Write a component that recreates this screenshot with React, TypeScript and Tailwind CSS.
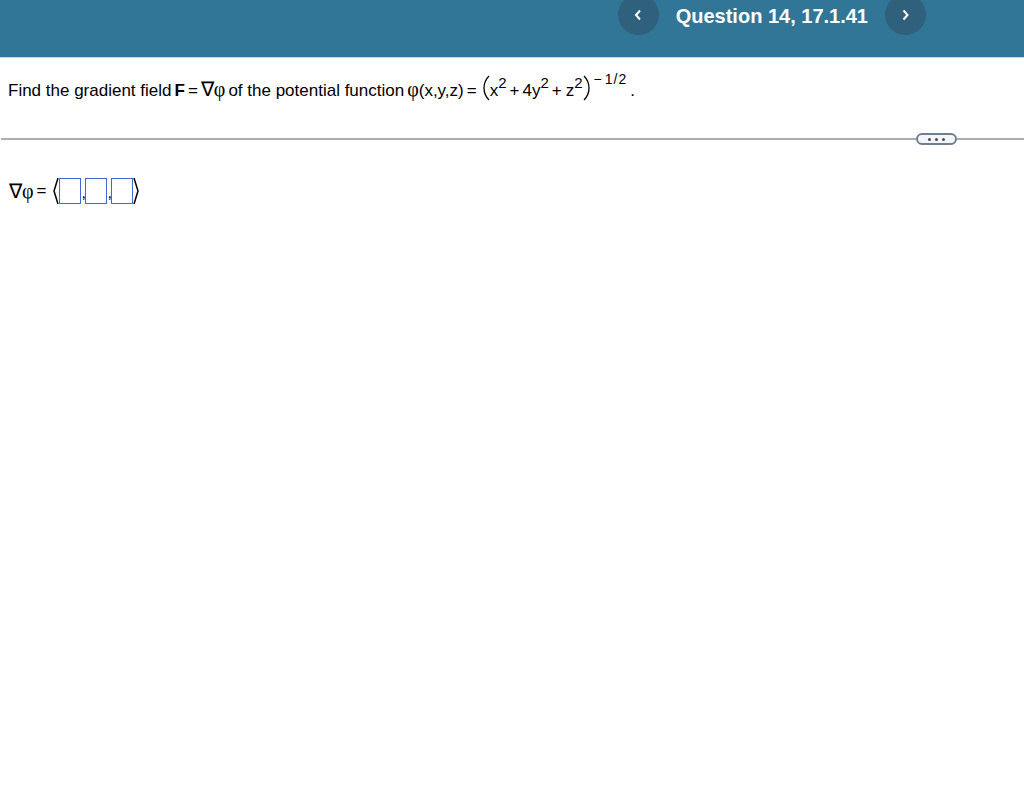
import { useState } from "react";
import type { ReactNode } from "react";

const COMPONENTS = ["x", "y", "z"] as const;

function NavButton({ label, points }: { label: string; points: string }) {
  return (
    <button
      type="button"
      aria-label={label}
      className="flex size-[41px] items-center justify-center rounded-full bg-[#2f617c] text-white"
    >
      <svg viewBox="0 0 10 12" className="h-3 w-[10px]" fill="none" stroke="currentColor" strokeWidth="2">
        <polyline points={points} />
      </svg>
    </button>
  );
}

function Sup({ children }: { children: ReactNode }) {
  return <span className="relative -top-2 text-[15px]">{children}</span>;
}

function Paren({ d }: { d: string }) {
  return (
    <svg viewBox="0 0 7 26" className="relative -top-1 h-[26px] w-[7px] self-center" fill="none" stroke="currentColor" strokeWidth="1.3">
      <path d={d} />
    </svg>
  );
}

function Greek({ children }: { children: ReactNode }) {
  return <span className="font-['Liberation_Serif',serif] text-xl/6">{children}</span>;
}

export default function App() {
  const [answers, setAnswers] = useState(["", "", ""]);

  const setAnswer = (index: number, value: string) => {
    setAnswers(answers.map((answer, i) => (i === index ? value : answer)));
  };

  return (
    <div className="min-h-screen bg-white font-['Liberation_Sans',Arial,sans-serif] text-[17px] leading-6 text-black">
      <header className="flex h-[58px] items-start justify-end overflow-hidden border-b border-[#c9d3e0] bg-[#317696] pr-[98px]">
        <div className="-mt-[6px] flex items-center gap-[17px]">
          <NavButton label="Previous question" points="7,1.5 3,6 7,10.5" />
          <h1 className="pt-[2px] text-xl font-bold text-white">Question 14, 17.1.41</h1>
          <NavButton label="Next question" points="2.5,1.5 6.5,6 2.5,10.5" />
        </div>
      </header>

      <main>
        <section className="flex h-20 items-center pl-2">
          <div className="-mt-[14px] flex items-baseline gap-[3px] whitespace-nowrap">
            <span>Find the gradient field</span>
            <b>F</b>
            <span>=</span>
            <Greek>∇φ</Greek>
            <span>of the potential function</span>
            <span>
              <Greek>φ</Greek>(x,y,z)
            </span>
            <span>=</span>
            <span className="ml-[3px] flex items-baseline">
              <Paren d="M6 1 Q1 6 1 13 T6 25" />
              <span>x</span>
              <Sup>2</Sup>
            </span>
            <span>+</span>
            <span className="flex items-baseline">
              4y<Sup>2</Sup>
            </span>
            <span>+</span>
            <span className="ml-px flex items-baseline">
              z<Sup>2</Sup>
              <Paren d="M1 1 Q6 6 6 13 T1 25" />
              <span className="relative -top-3 mx-1 flex gap-[3px] text-sm">
                <span>−</span>
                <span className="flex gap-px">
                  <span>1</span>
                  <span>/</span>
                  <span>2</span>
                </span>
              </span>
              <span>.</span>
            </span>
          </div>
        </section>

        <div className="flex items-center">
          <hr className="ml-px flex-1 border-t-2 border-[#a9acb9]" />
          <button
            type="button"
            aria-label="Resize panels"
            className="-my-[6px] flex h-3 w-[41px] items-center justify-center gap-1 rounded-full border-2 border-[#6f7e90] bg-[#f4f5f7]"
          >
            <span className="size-[3px] rounded-full bg-[#4b4b55]" />
            <span className="size-[3px] rounded-full bg-[#4b4b55]" />
            <span className="size-[3px] rounded-full bg-[#4b4b55]" />
          </button>
          <hr className="w-[67px] border-t-2 border-[#a9acb9]" />
        </div>

        <section className="flex items-center gap-[3px] py-[37px] pl-[9px]">
          <Greek>∇φ</Greek>
          <span>=</span>
          <div className="ml-1 flex items-center">
            <svg viewBox="0 0 6 26" className="h-[26px] w-[6px]" fill="none" stroke="currentColor" strokeWidth="1.5">
              <path d="M5 0 L1 13 L5 26" />
            </svg>
            {COMPONENTS.map((name, i) => (
              <div key={name} className="flex items-center">
                {i > 0 && <span className="mt-1 w-1 text-center text-base">,</span>}
                <input
                  aria-label={`${name} component`}
                  value={answers[i]}
                  onChange={(e) => setAnswer(i, e.target.value)}
                  className="h-[26px] w-[22px] border border-[#3f6bd0] bg-white text-center outline-none"
                />
              </div>
            ))}
            <svg viewBox="0 0 6 26" className="h-[26px] w-[6px]" fill="none" stroke="currentColor" strokeWidth="1.5">
              <path d="M1 0 L5 13 L1 26" />
            </svg>
          </div>
        </section>
      </main>
    </div>
  );
}
